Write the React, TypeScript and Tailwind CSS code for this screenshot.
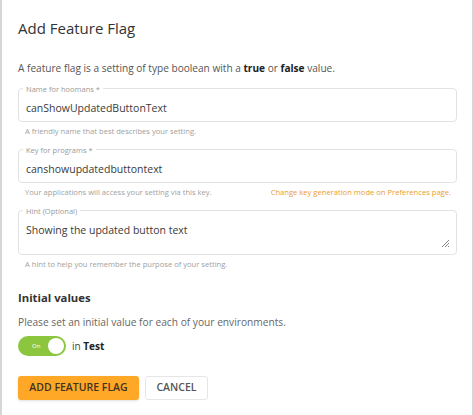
import React from 'react'

const Field = ({ label, value, helper, right, tall }: { label: string, value: string, helper: string, right?: string, tall?: boolean }) => (
  <div>
    <div className={`relative rounded-[4px] border border-[#e2e2e2] ${tall ? 'h-[45px]' : 'h-[34px]'}`}>
      <span className="absolute left-[4px] top-0 -translate-y-1/2 bg-white px-[3px] text-[7.5px] leading-[9px] text-[#9a9a9a]">{label}</span>
      <div className="pl-[7px] pt-[12px] text-[10.5px] leading-[14px] text-[#3a3a3a]">{value}</div>
      {tall && (
        <svg className="absolute right-[6px] bottom-[6px]" width="9" height="9" viewBox="0 0 9 9">
          <path d="M8 1 L1 8 M8 4 L4 8 M8 7 L7 8" stroke="#777" strokeWidth="0.9" />
        </svg>
      )}
    </div>
    <div className="flex justify-between pl-[7px] pr-[6px] pt-[4px] text-[7.6px] leading-[10px] text-[#a0a0a0]">
      <span>{helper}</span>
      {right && <span className="text-[#eb9b2f]">{right}</span>}
    </div>
  </div>
)

export default function App () {
  return (
    <div className="h-[415px] w-[474px] bg-[#d6d6d6] pl-[2px] pr-[2px] font-['Open_Sans',sans-serif]">
      <div className="h-full bg-white pl-[16px] pr-[15px] pt-[17px]">
        <h1 className="text-[15px] leading-[22px] text-[#333]">Add Feature Flag</h1>
        <p className="mt-[22px] text-[10.1px] leading-[14px] text-[#555]">
          A feature flag is a setting of type boolean with a <b className="text-[#222]">true</b> or <b className="text-[#222]">false</b> value.
        </p>
        <div className="mt-[13px] flex flex-col gap-[13px]">
          <Field label="Name for hoomans *" value="canShowUpdatedButtonText" helper="A friendly name that best describes your setting." />
          <Field label="Key for programs *" value="canshowupdatedbuttontext" helper="Your applications will access your setting via this key." right="Change key generation mode on Preferences page." />
          <Field label="Hint (Optional)" value="Showing the updated button text" helper="A hint to help you remember the purpose of your setting." tall />
        </div>
        <h2 className="mt-[21px] text-[11.3px] font-bold leading-[16px] text-[#333]">Initial values</h2>
        <p className="mt-[9px] text-[10.2px] leading-[14px] text-[#666]">Please set an initial value for each of your environments.</p>
        <div className="mt-[7px] flex items-center gap-[6px]">
          <div className="flex h-[20px] w-[48px] items-center justify-between rounded-full bg-[#8cc63f] pl-[14px] pr-[2px]">
            <span className="text-[6px] text-white">On</span>
            <span className="h-[16px] w-[16px] rounded-full bg-white" />
          </div>
          <span className="text-[10px] text-[#444]">in <b className="text-[#222]">Test</b></span>
        </div>
        <div className="mt-[20px] flex gap-[6px]">
          <button className="h-[24px] w-[121px] rounded-[3px] bg-[#ffa726] text-[10.5px] font-semibold text-[#3f3220] shadow-sm">ADD FEATURE FLAG</button>
          <button className="h-[24px] w-[63px] rounded-[3px] border border-[#e6e6e6] bg-white text-[10.5px] font-semibold text-[#555]">CANCEL</button>
        </div>
      </div>
    </div>
  )
}
